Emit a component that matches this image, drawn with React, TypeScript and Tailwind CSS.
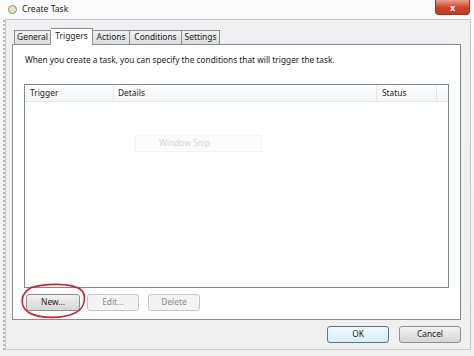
import React from "react";

const font = { fontFamily: '"Noto Sans", "Open Sans", Arial, sans-serif' };

function Btn({ label, w, disabled, focus }: { label: string; w: string; disabled?: boolean; focus?: boolean }) {
  return (
    <div
      className={`${w} h-[17px] rounded-[3px] border flex items-center justify-center text-[8.4px] leading-none ${
        focus
          ? "border-[#3c7fb1] bg-gradient-to-b from-[#f2f9fd] to-[#d9ecf7] text-[#1a1a1a]"
          : disabled
          ? "border-[#c4c4c4] bg-[#f4f4f4] text-[#8a8a8a]"
          : "border-[#8e8f8f] bg-gradient-to-b from-[#f2f2f2] to-[#d6d6d6] text-[#1a1a1a]"
      }`}
    >
      {label}
    </div>
  );
}

export default function App() {
  return (
    <div
      className="relative w-[474px] h-[356px] overflow-hidden bg-gradient-to-b from-[#fbfbfb] to-[#f0f0f0] text-[#1a1a1a]"
      style={font}
    >
      {/* title bar */}
      <div className="flex h-[19px] items-center pl-[8px]">
        <div className="w-[9px] h-[9px] rounded-full border border-[#8a8a6a] bg-[#e8e4c8] mr-[5px]" />
        <span className="text-[8.6px] leading-none">Create Task</span>
      </div>
      {/* close button */}
      <div className="absolute left-[435px] top-0 w-[35px] h-[15px] rounded-b-[4px] border border-[#8a3b2a] border-t-0 bg-gradient-to-b from-[#e8a08c] via-[#d0452c] to-[#c03a22] flex items-center justify-center">
        <span className="text-white text-[9px] font-bold leading-none">x</span>
      </div>
      {/* left dotted frame */}
      <div className="absolute left-[3px] top-[20px] h-[330px] border-l-2 border-dotted border-[#b8b8b8]" />

      {/* client area */}
      <div className="ml-[5px] w-[466px] h-[331px] border border-[#c8c8c8] bg-[#f0f0f0] pl-[6px] pr-[9px] pt-[7px]">
        {/* tabs */}
        <div className="flex items-end h-[17px] pl-[2px] text-[8.4px] leading-none">
          <div className="w-[37px] h-[14px] border border-b-0 border-[#898c95] bg-gradient-to-b from-[#f2f2f2] to-[#dcdcdc] flex items-center justify-center">General</div>
          <div className="relative z-10 w-[42px] h-[17px] -mb-px border border-b-0 border-l-0 border-[#898c95] bg-white flex items-start justify-center pt-[3px]">Triggers</div>
          <div className="w-[37px] h-[14px] border border-b-0 border-l-0 border-[#898c95] bg-gradient-to-b from-[#f2f2f2] to-[#dcdcdc] flex items-center justify-center">Actions</div>
          <div className="w-[52px] h-[14px] border border-b-0 border-l-0 border-[#898c95] bg-gradient-to-b from-[#f2f2f2] to-[#dcdcdc] flex items-center justify-center">Conditions</div>
          <div className="w-[38px] h-[14px] border border-b-0 border-l-0 border-[#898c95] bg-gradient-to-b from-[#f2f2f2] to-[#dcdcdc] flex items-center justify-center">Settings</div>
        </div>
        {/* panel */}
        <div className="w-[449px] h-[276px] border border-[#898c95] bg-white pl-[11px] pr-[11px] pt-[9px] flex flex-col">
          <div className="text-[8.3px] leading-[12px] pl-[1px]">
            When you create a task, you can specify the conditions that will trigger the task.
          </div>
          <div className="mt-[18px] w-[425px] h-[204px] border border-[#828790] flex flex-col">
            <div className="flex h-[17px] text-[8.4px] leading-none bg-gradient-to-b from-white to-[#f3f4f6] border-b border-[#e5e5e5]">
              <div className="w-[89px] flex items-center pl-[5px] border-r border-[#e5e5e5]">Trigger</div>
              <div className="w-[263px] flex items-center pl-[4px] border-r border-[#e5e5e5]">Details</div>
              <div className="w-[60px] flex items-center pl-[5px] border-r border-[#e5e5e5]">Status</div>
              <div className="flex-1" />
            </div>
            <div className="flex-1 bg-white" />
          </div>
          <div className="flex gap-[7px] mt-[6px] pl-[2px]">
            <Btn label="New..." w="w-[54px]" />
            <Btn label="Edit..." w="w-[52px]" disabled />
            <div className="ml-[2px]">
              <Btn label="Delete" w="w-[52px]" disabled />
            </div>
          </div>
        </div>
        {/* bottom buttons */}
        <div className="flex justify-end gap-[10px] mt-[6px]">
          <Btn label="OK" w="w-[62px]" focus />
          <Btn label="Cancel" w="w-[62px]" />
        </div>
      </div>

      {/* window snip watermark */}
      <div className="absolute left-[135px] top-[135px] w-[127px] h-[17px] border border-[#f3f3f3] bg-[#fcfcfd] flex items-center pl-[23px]">
        <span className="text-[8.4px] leading-none text-[#d4d4d8]">Window Snip</span>
      </div>

      {/* red hand-drawn ellipse */}
      <svg className="absolute left-0 top-0" width="474" height="356" viewBox="0 0 474 356">
        <path
          d="M 30 288 C 45 283, 70 283, 80 289 C 87 294, 86 308, 75 313 C 62 319, 38 319, 28 312 C 20 306, 19 294, 32 287"
          fill="none"
          stroke="#d9202a"
          strokeWidth="1.6"
        />
      </svg>
    </div>
  );
}
